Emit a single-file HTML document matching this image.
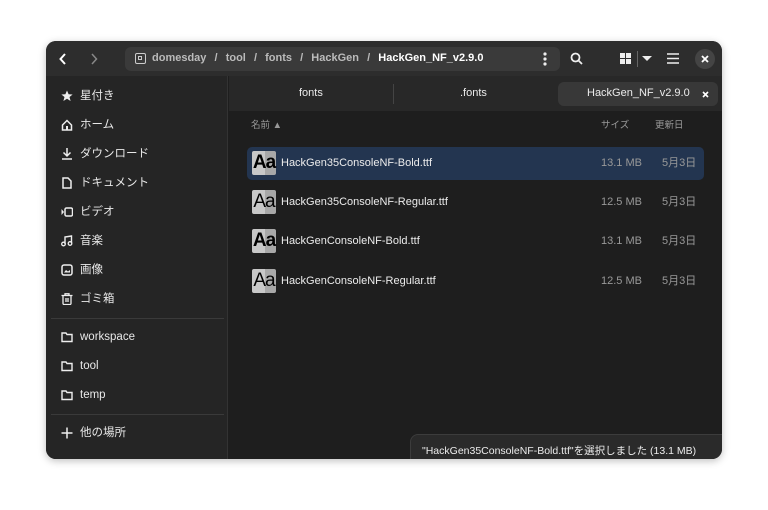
<!DOCTYPE html>
<html><head><meta charset="utf-8"><style>
*{margin:0;padding:0;box-sizing:border-box}
body{width:768px;height:510px;background:#fff;font-family:"Liberation Sans","Noto Sans CJK JP",sans-serif;color:#ececec;font-size:12px;position:relative;overflow:hidden}
.win{position:absolute;left:46px;top:41px;width:676px;height:418px;border-radius:10px;overflow:hidden;background:#1e1e1e;box-shadow:0 2px 8px rgba(0,0,0,.25)}
.hdr{position:absolute;left:0;top:0;width:676px;height:35px;background:#2d2d2d}
.side{position:absolute;left:0;top:35px;width:182px;height:383px;background:#252525;border-right:1px solid #333}
.tabs{position:absolute;left:183px;top:35px;right:0;height:35px;background:#282828}
.a{position:absolute;white-space:nowrap}
.si{position:absolute;left:15px;font-size:11.5px;color:#e8e8e8;line-height:14px;height:14px}
.si svg{position:absolute;left:0;top:1px}
.si span{position:absolute;left:19px;top:0;white-space:nowrap}
.sep{position:absolute;left:5px;width:173px;height:1px;background:#3a3a3a}
.row{position:absolute;left:201px;width:457px;height:33px;border-radius:5px}
.ico{position:absolute;left:5px;top:4px;width:24px;height:24px;background:linear-gradient(90deg,#c8c8c8 55%,#a8a8a8 55%);color:#000;font-size:19px;line-height:24px;letter-spacing:-1px;text-align:center;border-radius:2px}
.fn{position:absolute;left:34px;top:9px;font-size:11px;line-height:14px}
.sz{position:absolute;left:354px;top:9px;color:#999;font-size:11px;line-height:14px}
.dt{position:absolute;left:415px;top:9px;color:#999;font-size:11px;line-height:14px}
</style></head><body>
<div class="win">
<div class="hdr">
 <svg class="a" style="left:13px;top:12px" width="8" height="12"><path d="M6 1L1.5 6L6 11" stroke="#fff" stroke-width="2" fill="none"/></svg>
 <svg class="a" style="left:44px;top:12px" width="8" height="12"><path d="M2 1L6.5 6L2 11" stroke="#888" stroke-width="1.5" fill="none"/></svg>
 <div class="a" style="left:79px;top:6px;width:435px;height:24px;background:#3a3a3a;border-radius:6px"></div>
 <div class="a" style="left:89px;top:12px;width:11px;height:11px;border:1.5px solid #ccc;border-radius:2px"><div style="position:absolute;left:2px;top:2px;width:4px;height:4px;border:1px solid #ccc"></div></div>
 <div class="a" style="left:106px;top:11px;color:#bbb;font-weight:bold;font-size:11px;word-spacing:1px">domesday &nbsp;/&nbsp; tool &nbsp;/&nbsp; fonts &nbsp;/&nbsp; HackGen &nbsp;/&nbsp; <span style="color:#fff">HackGen_NF_v2.9.0</span></div>
 <svg class="a" style="left:497px;top:11px" width="4" height="14"><circle cx="2" cy="2" r="1.6" fill="#eee"/><circle cx="2" cy="7" r="1.6" fill="#eee"/><circle cx="2" cy="12" r="1.6" fill="#eee"/></svg>
 <svg class="a" style="left:524px;top:11px" width="14" height="14"><circle cx="5.5" cy="5.5" r="4" stroke="#eee" stroke-width="1.8" fill="none"/><path d="M8.5 8.5L12 12" stroke="#eee" stroke-width="1.8"/></svg>
 <svg class="a" style="left:574px;top:12px" width="12" height="12"><rect x="0" y="0" width="5" height="5" fill="#eee"/><rect x="6" y="0" width="5" height="5" fill="#eee"/><rect x="0" y="6" width="5" height="5" fill="#eee"/><rect x="6" y="6" width="5" height="5" fill="#eee"/></svg>
 <div class="a" style="left:591px;top:10px;width:1px;height:16px;background:#666"></div>
 <svg class="a" style="left:596px;top:15px" width="10" height="6"><path d="M0 0L10 0L5 5Z" fill="#eee"/></svg>
 <svg class="a" style="left:621px;top:12px" width="12" height="11"><path d="M0 1H12M0 5.5H12M0 10H12" stroke="#eee" stroke-width="1.6"/></svg>
 <div class="a" style="left:649px;top:8px;width:20px;height:20px;border-radius:50%;background:#444"></div>
 <svg class="a" style="left:655px;top:14px" width="8" height="8"><path d="M1 1L7 7M7 1L1 7" stroke="#fff" stroke-width="1.8"/></svg>
</div>
<div class="side">
 <div class="si" style="top:13px"><svg width="12" height="12"><path d="M6 0.5L7.6 4.3L11.6 4.5L8.5 7L9.6 11L6 8.8L2.4 11L3.5 7L0.4 4.5L4.4 4.3Z" fill="#eee"/></svg><span>星付き</span></div>
 <div class="si" style="top:42px"><svg width="12" height="12"><path d="M1.5 6L6 1.5L10.5 6V11H1.5Z" stroke="#eee" stroke-width="1.5" fill="none"/><rect x="5" y="7" width="2" height="4" fill="#eee"/></svg><span>ホーム</span></div>
 <div class="si" style="top:71px"><svg width="12" height="12"><path d="M6 0V8M2.5 4.5L6 8L9.5 4.5M1 11H11" stroke="#eee" stroke-width="1.5" fill="none"/></svg><span>ダウンロード</span></div>
 <div class="si" style="top:100px"><svg width="12" height="12"><path d="M2 1H7L10 4V11H2Z" stroke="#eee" stroke-width="1.5" fill="none"/></svg><span>ドキュメント</span></div>
 <div class="si" style="top:129px"><svg width="12" height="12"><rect x="4" y="2" width="7.5" height="8" rx="1.5" stroke="#eee" stroke-width="1.5" fill="none"/><path d="M0.5 3L3 6L0.5 9Z" fill="#eee"/></svg><span>ビデオ</span></div>
 <div class="si" style="top:158px"><svg width="12" height="12"><path d="M4 9V2L10.5 1V8" stroke="#eee" stroke-width="1.4" fill="none"/><circle cx="2.5" cy="9" r="1.8" stroke="#eee" stroke-width="1.3" fill="none"/><circle cx="9" cy="8.5" r="1.8" stroke="#eee" stroke-width="1.3" fill="none"/></svg><span>音楽</span></div>
 <div class="si" style="top:187px"><svg width="12" height="12"><rect x="1" y="1" width="10" height="10" rx="2" stroke="#eee" stroke-width="1.5" fill="none"/><path d="M3 8.5L5 6L7 7.5L9 6V8.5Z" fill="#eee"/></svg><span>画像</span></div>
 <div class="si" style="top:216px"><svg width="12" height="12"><path d="M0.5 2.5H11.5M4 2.5V0.8H8V2.5M2 2.5V10.5C2 11 2.5 11.5 3 11.5H9C9.5 11.5 10 11 10 10.5V2.5M5 5V9M7 5V9" stroke="#eee" stroke-width="1.3" fill="none"/></svg><span>ゴミ箱</span></div>
 <div class="sep" style="top:242px"></div>
 <div class="si" style="top:254px"><svg width="12" height="12"><path d="M1 2H5L6 3.5H11V10.5H1Z" stroke="#eee" stroke-width="1.4" fill="none"/></svg><span>workspace</span></div>
 <div class="si" style="top:283px"><svg width="12" height="12"><path d="M1 2H5L6 3.5H11V10.5H1Z" stroke="#eee" stroke-width="1.4" fill="none"/></svg><span>tool</span></div>
 <div class="si" style="top:312px"><svg width="12" height="12"><path d="M1 2H5L6 3.5H11V10.5H1Z" stroke="#eee" stroke-width="1.4" fill="none"/></svg><span>temp</span></div>
 <div class="sep" style="top:338px"></div>
 <div class="si" style="top:350px"><svg width="12" height="12"><path d="M6 0.5V11.5M0.5 6H11.5" stroke="#eee" stroke-width="1.5"/></svg><span>他の場所</span></div>
</div>
<div class="tabs">
 <div class="a" style="left:70px;top:11px;font-size:11px">fonts</div>
 <div class="a" style="left:164px;top:8px;width:1px;height:20px;background:#444"></div>
 <div class="a" style="left:231px;top:11px;font-size:11px">.fonts</div>
 <div class="a" style="left:329px;top:6px;width:160px;height:24px;background:#383838;border-radius:6px"></div>
 <div class="a" style="left:358px;top:11px;font-size:11px">HackGen_NF_v2.9.0</div>
 <svg class="a" style="left:473px;top:15px" width="7" height="7"><path d="M1 1L6 6M6 1L1 6" stroke="#fff" stroke-width="1.6"/></svg>
</div>
<div class="a" style="left:205px;top:76px;font-size:9.5px;color:#999">名前 ▲</div>
<div class="a" style="left:555px;top:76px;font-size:9.5px;color:#999">サイズ</div>
<div class="a" style="left:609px;top:76px;font-size:9.5px;color:#999">更新日</div>
<div class="row" style="top:106px;background:#233550"><div class="ico" style="font-weight:bold">Aa</div><div class="fn">HackGen35ConsoleNF-Bold.ttf</div><div class="sz">13.1 MB</div><div class="dt">5月3日</div></div>
<div class="row" style="top:145px"><div class="ico">Aa</div><div class="fn">HackGen35ConsoleNF-Regular.ttf</div><div class="sz">12.5 MB</div><div class="dt">5月3日</div></div>
<div class="row" style="top:184px"><div class="ico" style="font-weight:bold">Aa</div><div class="fn">HackGenConsoleNF-Bold.ttf</div><div class="sz">13.1 MB</div><div class="dt">5月3日</div></div>
<div class="row" style="top:224px"><div class="ico">Aa</div><div class="fn">HackGenConsoleNF-Regular.ttf</div><div class="sz">12.5 MB</div><div class="dt">5月3日</div></div>
<div class="a" style="left:364px;top:393px;width:320px;height:30px;background:#2a2a2a;border:1px solid #3c3c3c;border-radius:8px 0 0 0"></div>
<div class="a" style="left:376px;top:402px;font-size:10.5px">"HackGen35ConsoleNF-Bold.ttf"を選択しました (13.1 MB)</div>
</div>
</body></html>
